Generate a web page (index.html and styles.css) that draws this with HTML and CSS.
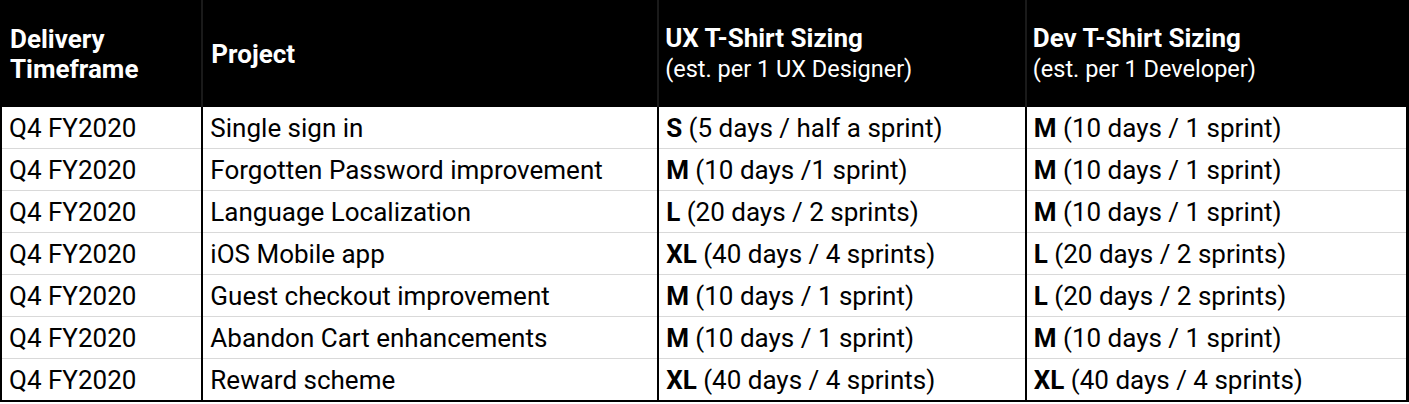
FILE: index.html
```html
<!DOCTYPE html>
<html>
<head>
<meta charset="utf-8">
<link rel="stylesheet" href="styles.css">
</head>
<body>
<table class="sizing">
  <colgroup>
    <col class="c1"><col class="c2"><col class="c3"><col class="c4">
  </colgroup>
  <thead>
    <tr>
      <th>Delivery<br>Timeframe</th>
      <th>Project</th>
      <th>UX T-Shirt Sizing<br><span class="sub">(est. per 1 UX Designer)</span></th>
      <th>Dev T-Shirt Sizing<br><span class="sub">(est. per 1 Developer)</span></th>
    </tr>
  </thead>
  <tbody>
    <tr><td>Q4 FY2020</td><td>Single sign in</td><td><b>S</b> (5 days / half a sprint)</td><td><b>M</b> (10 days / 1 sprint)</td></tr>
    <tr><td>Q4 FY2020</td><td>Forgotten Password improvement</td><td><b>M</b> (10 days /1 sprint)</td><td><b>M</b> (10 days / 1 sprint)</td></tr>
    <tr><td>Q4 FY2020</td><td>Language Localization</td><td><b>L</b> (20 days / 2 sprints)</td><td><b>M</b> (10 days / 1 sprint)</td></tr>
    <tr><td>Q4 FY2020</td><td>iOS Mobile app</td><td><b>XL</b> (40 days / 4 sprints)</td><td><b>L</b> (20 days / 2 sprints)</td></tr>
    <tr><td>Q4 FY2020</td><td>Guest checkout improvement</td><td><b>M</b> (10 days / 1 sprint)</td><td><b>L</b> (20 days / 2 sprints)</td></tr>
    <tr><td>Q4 FY2020</td><td>Abandon Cart enhancements</td><td><b>M</b> (10 days / 1 sprint)</td><td><b>M</b> (10 days / 1 sprint)</td></tr>
    <tr><td>Q4 FY2020</td><td>Reward scheme</td><td><b>XL</b> (40 days / 4 sprints)</td><td><b>XL</b> (40 days / 4 sprints)</td></tr>
  </tbody>
</table>
</body>
</html>
```
FILE: styles.css
```css
html, body {
  margin: 0;
  padding: 0;
  background: #fff;
}
body {
  font-family: Roboto, "Liberation Sans", sans-serif;
  color: #000;
}
.sizing {
  border-collapse: collapse;
  table-layout: fixed;
  width: 1409px;
  border-left: 2px solid #000;
  border-right: 3px solid #000;
  border-bottom: 2px solid #000;
}
.c1 { width: 201px; }
.c2 { width: 455px; }
.c3 { width: 367px; }
.c4 { width: 381px; }
.sizing th {
  background: #000;
  color: #fff;
  height: 107px;
  padding: 0 0 0 8px;
  box-sizing: border-box;
  text-align: left;
  vertical-align: middle;
  font-size: 26px;
  font-weight: 700;
  line-height: 30px;
  border-left: 2px solid #1a1a1a;
  white-space: nowrap;
}
.sizing th:nth-child(3),
.sizing th:nth-child(4) { padding-left: 6px; }
.sizing th:first-child { border-left: none; }
.sizing .sub {
  font-weight: 400;
  font-size: 23.5px;
}
.sizing td {
  height: 41px;
  padding: 2px 0 0 7px;
  box-sizing: border-box;
  font-size: 26px;
  line-height: 39px;
  white-space: nowrap;
  border-left: 2px solid #000;
  border-top: 1px solid #d9d9d9;
}
.sizing td:first-child { border-left: none; }
.sizing tbody tr:first-child td { border-top: none; }
.sizing b { font-weight: 700; }
```
